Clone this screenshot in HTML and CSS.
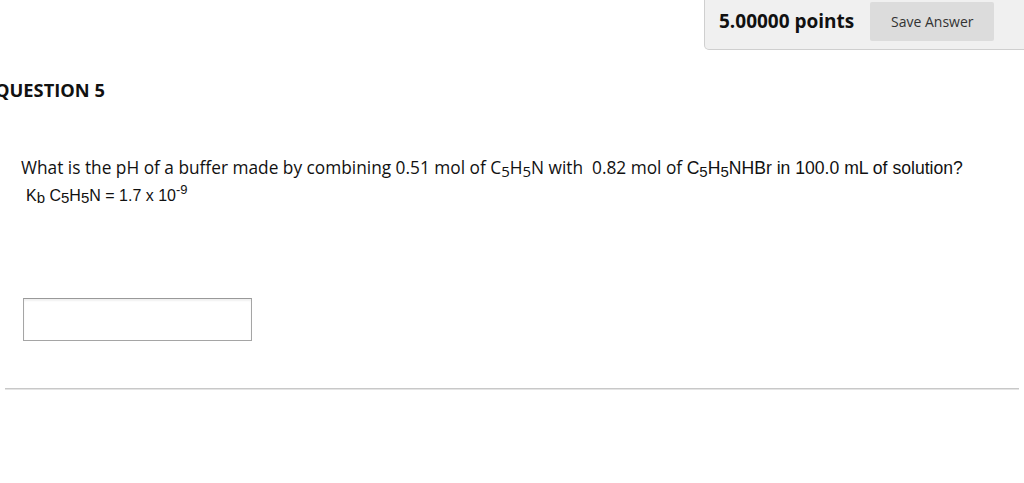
FILE: index.html
```html
<!DOCTYPE html>
<html>
<head>
<meta charset="utf-8">
<link rel="stylesheet" href="styles.css">
</head>
<body>
<div class="topbar">
  <div class="pointsbox">
    <span class="points">5.00000 points</span>
    <button class="save">Save Answer</button>
  </div>
</div>
<h2 class="qtitle">QUESTION 5</h2>
<div class="question">
  <p class="qline">What is the pH of a buffer made by combining 0.51 mol of C<sub>5</sub>H<sub>5</sub>N with&nbsp; 0.82 mol of <span class="arial">C<sub>5</sub>H<sub>5</sub>NHBr in 100.0 mL of solution?</span></p>
  <p class="kline">K<sub>b</sub> C<sub>5</sub>H<sub>5</sub>N = 1.7 x 10<sup>-9</sup></p>
</div>
<div class="answer">
  <input type="text" class="ans">
</div>
<hr class="sep">
</body>
</html>
```
FILE: styles.css
```css
html, body {
  margin: 0;
  padding: 0;
  background: #fff;
  font-family: "Open Sans", sans-serif;
  color: #111;
  overflow: hidden;
}
.topbar {
  display: flex;
  justify-content: flex-end;
}
.pointsbox {
  width: 321px;
  height: 50px;
  box-sizing: border-box;
  margin-right: -1px;
  background: #f0f0f0;
  border: 1px solid #cfcfcf;
  border-top: none;
  border-radius: 0 0 0 5px;
  display: flex;
  align-items: flex-start;
  padding-left: 14px;
  padding-top: 2px;
}
.points {
  font-weight: 700;
  font-size: 19px;
  line-height: 38px;
  color: #111;
  margin-right: 16px;
  white-space: nowrap;
}
.save {
  font-family: "Open Sans", sans-serif;
  font-size: 14px;
  color: #333;
  background: #dcdcdc;
  border: none;
  border-radius: 2px;
  width: 124px;
  height: 39px;
  padding: 0;
}
.qtitle {
  margin: 27px 0 0 -5px;
  font-size: 18.3px;
  font-weight: 700;
  line-height: 26px;
  color: #111;
}
.question {
  margin: 54px 0 0 21px;
}
.qline {
  margin: 0;
  font-size: 17.3px;
  line-height: 22px;
  color: #111;
  white-space: nowrap;
}
.arial {
  font-family: "Liberation Sans", Arial, sans-serif;
  font-size: 17.6px;
}
sub {
  font-size: 15px;
  vertical-align: -3px;
  line-height: 0;
}
sup {
  font-size: 13px;
  vertical-align: 7px;
  line-height: 0;
}
.kline {
  margin: 6px 0 0 5px;
  font-family: "Liberation Sans", Arial, sans-serif;
  font-size: 16px;
  line-height: 22px;
  color: #111;
}
.kline sub {
  font-size: 15px;
  vertical-align: -2px;
}
.answer {
  margin: 91px 0 0 23px;
}
.ans {
  display: block;
  width: 229px;
  height: 43px;
  box-sizing: border-box;
  border: 1px solid #a5a5a5;
  border-top-color: #999;
  box-shadow: inset 0 2px 2px rgba(0,0,0,0.06);
  margin: 0;
  padding: 0;
  background: #fff;
}
.sep {
  margin: 47px 5px 0 5px;
  border: none;
  border-top: 1px solid #c8c8c8;
  border-bottom: 1px solid #e4e4e4;
  height: 0;
}
```
